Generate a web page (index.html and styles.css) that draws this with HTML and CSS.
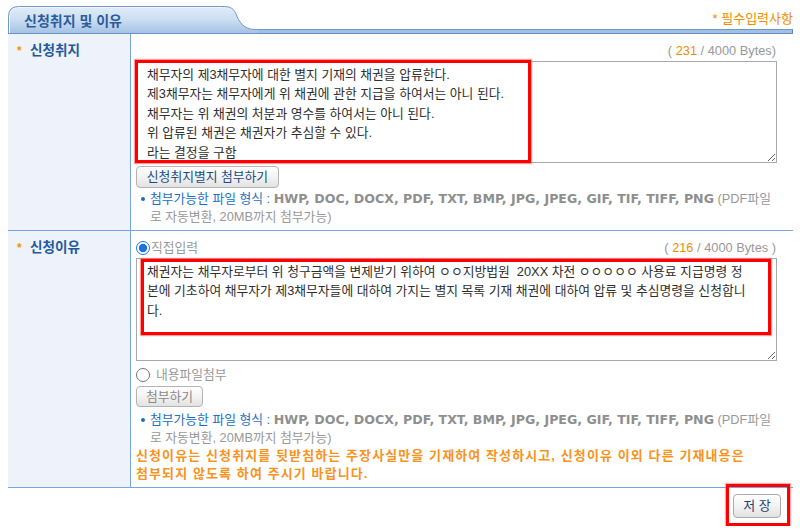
FILE: index.html
```html
<!DOCTYPE html>
<html lang="ko">
<head>
<meta charset="utf-8">
<title>신청취지 및 이유</title>
<link rel="stylesheet" href="styles.css">
</head>
<body>
<div class="page">
  <div class="head">
    <div class="tab">
      <svg class="tab-shape" width="250" height="28" viewBox="0 0 250 28" aria-hidden="true">
        <defs>
          <linearGradient id="tg" x1="0" y1="0" x2="0" y2="1">
            <stop offset="0" stop-color="#e2ecf8"/>
            <stop offset="0.45" stop-color="#cddff2"/>
            <stop offset="1" stop-color="#a2c1e4"/>
          </linearGradient>
        </defs>
        <path d="M0.5,28 V10.5 Q0.5,0.5 10.5,0.5 H215 C223,0.5 226,3 228,8 C231,16 236,23.5 247,23.5 H250 V28 Z" fill="url(#tg)"/>
        <path d="M1.5,27 V10.5 Q1.5,1.5 10.5,1.5 H214" fill="none" stroke="#f2f7fd" stroke-width="1"/>
        <path d="M0.5,28 V10.5 Q0.5,0.5 10.5,0.5 H215 C223,0.5 226,3 228,8 C231,16 236,23.5 247,23.5 H250" fill="none" stroke="#7399c8" stroke-width="1"/>
        <line x1="0" y1="27.5" x2="250" y2="27.5" stroke="#6a92c4" stroke-width="1"/>
      </svg>
      <span class="tab-title">신청취지 및 이유</span>
    </div>
    <div class="head-right">
      <span class="req">* 필수입력사항</span>
      <div class="bar"></div>
    </div>
  </div>

  <div class="form">
    <div class="label"><span class="star">*</span>신청취지</div>
    <div class="field">
      <div class="counter">( <span class="num">231</span> / 4000 Bytes)</div>
      <div class="ta-wrap">
        <textarea class="ta ta1" wrap="off">채무자의 제3채무자에 대한 별지 기재의 채권을 압류한다.
제3채무자는 채무자에게 위 채권에 관한 지급을 하여서는 아니 된다.
채무자는 위 채권의 처분과 영수를 하여서는 아니 된다.
위 압류된 채권은 채권자가 추심할 수 있다.
라는 결정을 구함</textarea>
        <div class="mark mark1"></div>
      </div>
      <button class="btn btn-attach" type="button">신청취지별지 첨부하기</button>
      <div class="note">
        <span class="dot"></span>
        <div class="note-text"><span class="note-key">첨부가능한 파일 형식 :</span> <b class="types">HWP, DOC, DOCX, PDF, TXT, BMP, JPG, JPEG, GIF, TIF, TIFF, PNG</b> (PDF파일<br>로 자동변환, 20MB까지 첨부가능)</div>
      </div>
    </div>

    <div class="label"><span class="star">*</span>신청이유</div>
    <div class="field">
      <div class="radio-row">
        <label class="radio"><input type="radio" name="reason" checked><span>직접입력</span></label>
        <span class="counter2">( <span class="num">216</span> / 4000 Bytes )</span>
      </div>
      <div class="ta-wrap">
        <textarea class="ta ta2" wrap="off">채권자는 채무자로부터 위 청구금액을 변제받기 위하여 ㅇㅇ지방법원  20XX 차전 ㅇㅇㅇㅇㅇ 사용료 지급명령 정
본에 기초하여 채무자가 제3채무자들에 대하여 가지는 별지 목록 기재 채권에 대하여 압류 및 추심명령을 신청합니
다.</textarea>
        <div class="mark mark2"></div>
      </div>
      <div class="radio-row radio-row2">
        <label class="radio"><input type="radio" name="reason"><span class="file-label">내용파일첨부</span></label>
      </div>
      <button class="btn btn-file" type="button">첨부하기</button>
      <div class="note note2">
        <span class="dot"></span>
        <div class="note-text"><span class="note-key">첨부가능한 파일 형식 :</span> <b class="types">HWP, DOC, DOCX, PDF, TXT, BMP, JPG, JPEG, GIF, TIF, TIFF, PNG</b> (PDF파일<br>로 자동변환, 20MB까지 첨부가능)</div>
      </div>
      <p class="warn">신청이유는 신청취지를 뒷받침하는 주장사실만을 기재하여 작성하시고, 신청이유 이외 다른 기재내용은<br>첨부되지 않도록 하여 주시기 바랍니다.</p>
    </div>
  </div>

  <div class="actions">
    <div class="hl"><button class="btn btn-save" type="button">저 장</button></div>
  </div>
</div>
</body>
</html>
```

FILE: styles.css
```css
* { box-sizing: border-box; }

html, body {
  margin: 0;
  padding: 0;
  background: #ffffff;
}

body {
  font-family: "Liberation Sans", "Noto Sans CJK KR", sans-serif;
  font-size: 12.8px;
  color: #333333;
}

.page {
  width: 793px;
  padding: 6px 0 0 8px;
}

/* header */
.head {
  display: flex;
  height: 28px;
}

.tab {
  position: relative;
  width: 250px;
  height: 28px;
  flex: none;
}

.tab-shape {
  position: absolute;
  left: 0;
  top: 0;
  display: block;
}

.tab-title {
  position: relative;
  display: block;
  padding: 6px 0 0 16px;
  font-size: 14px;
  font-weight: bold;
  line-height: 18px;
  color: #2b5c9c;
}

.head-right {
  flex: 1;
  display: flex;
  flex-direction: column;
  align-items: flex-end;
}

.req {
  display: block;
  height: 23px;
  padding-top: 5px;
  line-height: 16px;
  color: #f08c00;
  font-size: 13px;
}

.bar {
  align-self: stretch;
  height: 5px;
  background: #a0c0e5;
  border-top: 1px solid #6f97c9;
  border-bottom: 1px solid #628cc2;
  border-right: 1px solid #628cc2;
}

/* form grid */
.form {
  display: grid;
  grid-template-columns: 123px 1fr;
  border-bottom: 1px solid #78a4e4;
}

.label {
  background: #eef3fb;
  border-right: 1px solid #78a4e4;
  padding: 8px 0 0 9px;
  font-size: 13.6px;
  font-weight: bold;
  line-height: 18px;
  color: #25599e;
}

.label:nth-of-type(1) {
  border-bottom: 1px solid #78a4e4;
}

.star {
  display: inline-block;
  width: 13px;
  color: #f39800;
  font-size: 12px;
  font-weight: bold;
}

.field {
  padding: 8px 16px 4px 5px;
  line-height: 18px;
}

.form > .field:nth-of-type(2) {
  border-bottom: 1px solid #78a4e4;
  padding-bottom: 4px;
}

.counter {
  text-align: right;
  color: #999999;
  padding-right: 1px;
}

.num {
  color: #f08c00;
}

.ta-wrap {
  position: relative;
  margin-top: 1px;
}

.ta {
  display: block;
  width: 641px;
  margin: 0;
  border: 1px solid #a9a9a9;
  padding: 3px 10px;
  font-family: "Liberation Sans", "Noto Sans CJK KR", sans-serif;
  font-size: 12.8px;
  line-height: 19.4px;
  color: #2e2e2e;
  white-space: pre;
  overflow: hidden;
  resize: both;
  background: #ffffff;
}

.ta1 { height: 102px; }
.ta2 { height: 103px; }

.mark {
  position: absolute;
  border: 3px solid #ff0000;
  box-shadow: 0 0 1px 1px rgba(255, 90, 90, 0.6);
  pointer-events: none;
}

.mark1 {
  left: -1px;
  top: -1px;
  width: 396px;
  height: 103px;
}

.mark2 {
  left: 5px;
  top: 1px;
  width: 630px;
  height: 76px;
}

.btn {
  display: block;
  font-family: "Liberation Sans", "Noto Sans CJK KR", sans-serif;
  font-size: 12.8px;
  line-height: 18px;
  border: 1px solid #b3b3b3;
  border-radius: 4px;
  background: linear-gradient(#ffffff, #f3f3f3 50%, #e2e2e2);
  padding: 0;
  cursor: pointer;
}

.btn-attach {
  margin-top: 3px;
  width: 143px;
  height: 22px;
  color: #1d4b86;
}

.btn-file {
  margin-top: 2px;
  width: 67px;
  height: 21px;
  color: #8a8a8a;
}

.note {
  display: flex;
  margin-top: 2px;
  padding-left: 5px;
  white-space: nowrap;
  color: #999999;
}

.note2 {
  margin-top: 4px;
}

.dot {
  flex: none;
  width: 4px;
  height: 4px;
  margin: 7px 5px 0 0;
  border-radius: 50%;
  background: #1a6fc4;
}

.note-key {
  color: #1a70c8;
}

.types {
  font-family: "DejaVu Sans", "Liberation Sans", sans-serif;
  font-size: 12.6px;
  font-weight: bold;
  color: #8f8f8f;
}

.radio-row {
  display: flex;
  justify-content: space-between;
  align-items: center;
  height: 18px;
}

.radio-row2 {
  margin-top: 5px;
}

.radio {
  display: flex;
  align-items: center;
  color: #999999;
}

.radio input {
  margin: 0 1px 0 0;
  width: 14px;
  height: 14px;
  accent-color: #1f72dd;
}

.file-label {
  margin-left: 5px;
}

.counter2 {
  color: #999999;
  padding-right: 1px;
}

.warn {
  margin: 0;
  color: #f7931e;
  font-weight: bold;
  font-size: 13px;
  letter-spacing: 1.1px;
  line-height: 18px;
  white-space: nowrap;
}

/* save */
.actions {
  display: flex;
  justify-content: flex-end;
  margin-top: -4px;
  padding-right: 3px;
}

.hl {
  border: 3px solid #ff0000;
  box-shadow: 0 0 1px 1px rgba(255, 90, 90, 0.5);
  padding: 7px 6px 5px 4px;
}

.btn-save {
  width: 48px;
  height: 24px;
  font-size: 13px;
  color: #1d3f73;
  border-color: #aaaaaa;
}
```
